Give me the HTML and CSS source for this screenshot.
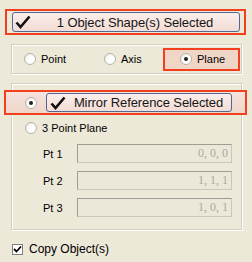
FILE: index.html
```html
<!DOCTYPE html>
<html lang="en">
<head>
  <meta charset="UTF-8">
  <title>Mirror</title>
  <link rel="stylesheet" href="styles.css">
</head>
<body>

<div class="mark top-mark">
  <div class="sel-btn">
    <svg class="tick" width="16" height="14" viewBox="0 0 16 14"><path d="M1.5 7.5 L5.5 12 L14.5 1.5" fill="none" stroke="#111" stroke-width="2.6" stroke-linejoin="miter"/></svg>
    <span class="sel-text">1 Object Shape(s) Selected</span>
  </div>
</div>

<div class="group type-group">
  <label class="cell cell-point"><span class="radio"></span>Point</label>
  <label class="cell cell-axis"><span class="radio"></span>Axis</label>
  <label class="cell cell-plane"><span class="radio on"></span>Plane</label>
</div>

<div class="group plane-group">
  <div class="mark mirror-mark">
    <span class="radio on"></span>
    <div class="sel-btn mirror-btn">
      <svg class="tick" width="16" height="14" viewBox="0 0 16 14"><path d="M1.5 7.5 L5.5 12 L14.5 1.5" fill="none" stroke="#111" stroke-width="2.6" stroke-linejoin="miter"/></svg>
      <span class="sel-text">Mirror Reference Selected</span>
    </div>
  </div>

  <label class="row three-pt"><span class="radio"></span>3 Point Plane</label>

  <div class="pt-row">
    <span class="pt-label">Pt 1</span>
    <div class="field">0, 0, 0</div>
  </div>
  <div class="pt-row">
    <span class="pt-label">Pt 2</span>
    <div class="field">1, 1, 1</div>
  </div>
  <div class="pt-row">
    <span class="pt-label">Pt 3</span>
    <div class="field">1, 0, 1</div>
  </div>
</div>

<label class="copy-row"><span class="check">
  <svg width="9" height="9" viewBox="0 0 9 9"><path d="M1 4 L3.5 6.5 L8 1.5" fill="none" stroke="#000" stroke-width="1.8"/></svg>
</span>Copy Object(s)</label>

</body>
</html>
```

FILE: styles.css
```css
body {
  margin: 0;
  background: #ece9d8;
  font-family: "Liberation Sans", Arial, sans-serif;
  font-size: 11px;
  color: #000;
  width: 252px;
  height: 262px;
  overflow: hidden;
}

/* red annotation frames */
.mark {
  border: 2px solid #f2401e;
  box-sizing: border-box;
}

.top-mark {
  margin: 9px 6px 0 5px;
  height: 26px;
  padding: 1px 4px 1px 5px;
  display: flex;
}

.sel-btn {
  flex: 1;
  display: flex;
  align-items: center;
  border: 1px solid #4e6a92;
  border-radius: 3px;
  background: linear-gradient(#faeeea, #f3dcd5);
  box-sizing: border-box;
  padding-left: 2px;
}

.tick {
  flex: none;
}

.sel-text {
  flex: 1;
  text-align: center;
  font-size: 13px;
  letter-spacing: -0.1px;
  color: #151515;
}

/* group boxes */
.group {
  border: 1px solid #d0d0bf;
  box-shadow: inset 1px 1px 0 #fff, 1px 1px 0 #fff;
  margin-left: 11px;
  width: 231px;
  box-sizing: border-box;
}

.type-group {
  margin-top: 9px;
  height: 30px;
  display: flex;
  align-items: center;
  padding-left: 1px;
}

.cell {
  display: flex;
  align-items: center;
  height: 23px;
  box-sizing: border-box;
}

.cell-point {
  width: 78px;
  padding-left: 11px;
}

.cell-axis {
  width: 72px;
  padding-left: 13px;
}

.cell-plane {
  width: 77px;
  padding-left: 15px;
  border: 2px solid #f2401e;
  background: #f0d6c6;
}

.radio {
  width: 12px;
  height: 12px;
  border-radius: 50%;
  border: 1px solid #b5b5aa;
  background: radial-gradient(circle at 65% 65%, #fff 40%, #e4e2d8 100%);
  box-sizing: border-box;
  margin-right: 5px;
  display: flex;
  align-items: center;
  justify-content: center;
  flex: none;
}

.radio.on::after {
  content: "";
  width: 4px;
  height: 4px;
  border-radius: 50%;
  background: #222;
}

.plane-group {
  margin-top: 9px;
  height: 147px;
  padding-top: 6px;
}

.mirror-mark {
  margin: 0 -6px 0 -8px;
  height: 25px;
  display: flex;
  align-items: center;
  padding: 1px 13px 1px 19px;
  background: linear-gradient(#f5e3dc, #efd5ca);
}

.mirror-btn {
  height: 19px;
  margin-left: 4px;
  padding-left: 3px;
}

.three-pt {
  display: flex;
  align-items: center;
  height: 14px;
  margin: 6px 0 0 13px;
}

.pt-row {
  display: flex;
  align-items: center;
  height: 19px;
  margin-top: 8px;
}

.three-pt + .pt-row {
  margin-top: 9px;
}

.pt-label {
  width: 34px;
  padding-left: 31px;
}

.field {
  width: 155px;
  height: 19px;
  box-sizing: border-box;
  border: 1px solid #c9c7ba;
  border-top-color: #9d9d93;
  border-left-color: #9d9d93;
  background: #ebe8d9;
  color: #aca899;
  text-align: right;
  padding-right: 3px;
  line-height: 17px;
  font-family: "Liberation Serif", serif;
  font-size: 12px;
}

.copy-row {
  display: flex;
  align-items: center;
  margin: 12px 0 0 12px;
  font-size: 12px;
}

.check {
  width: 11px;
  height: 11px;
  border: 1px solid #80807a;
  background: #fff;
  box-sizing: border-box;
  display: flex;
  align-items: center;
  justify-content: center;
  margin-right: 6px;
}
```
